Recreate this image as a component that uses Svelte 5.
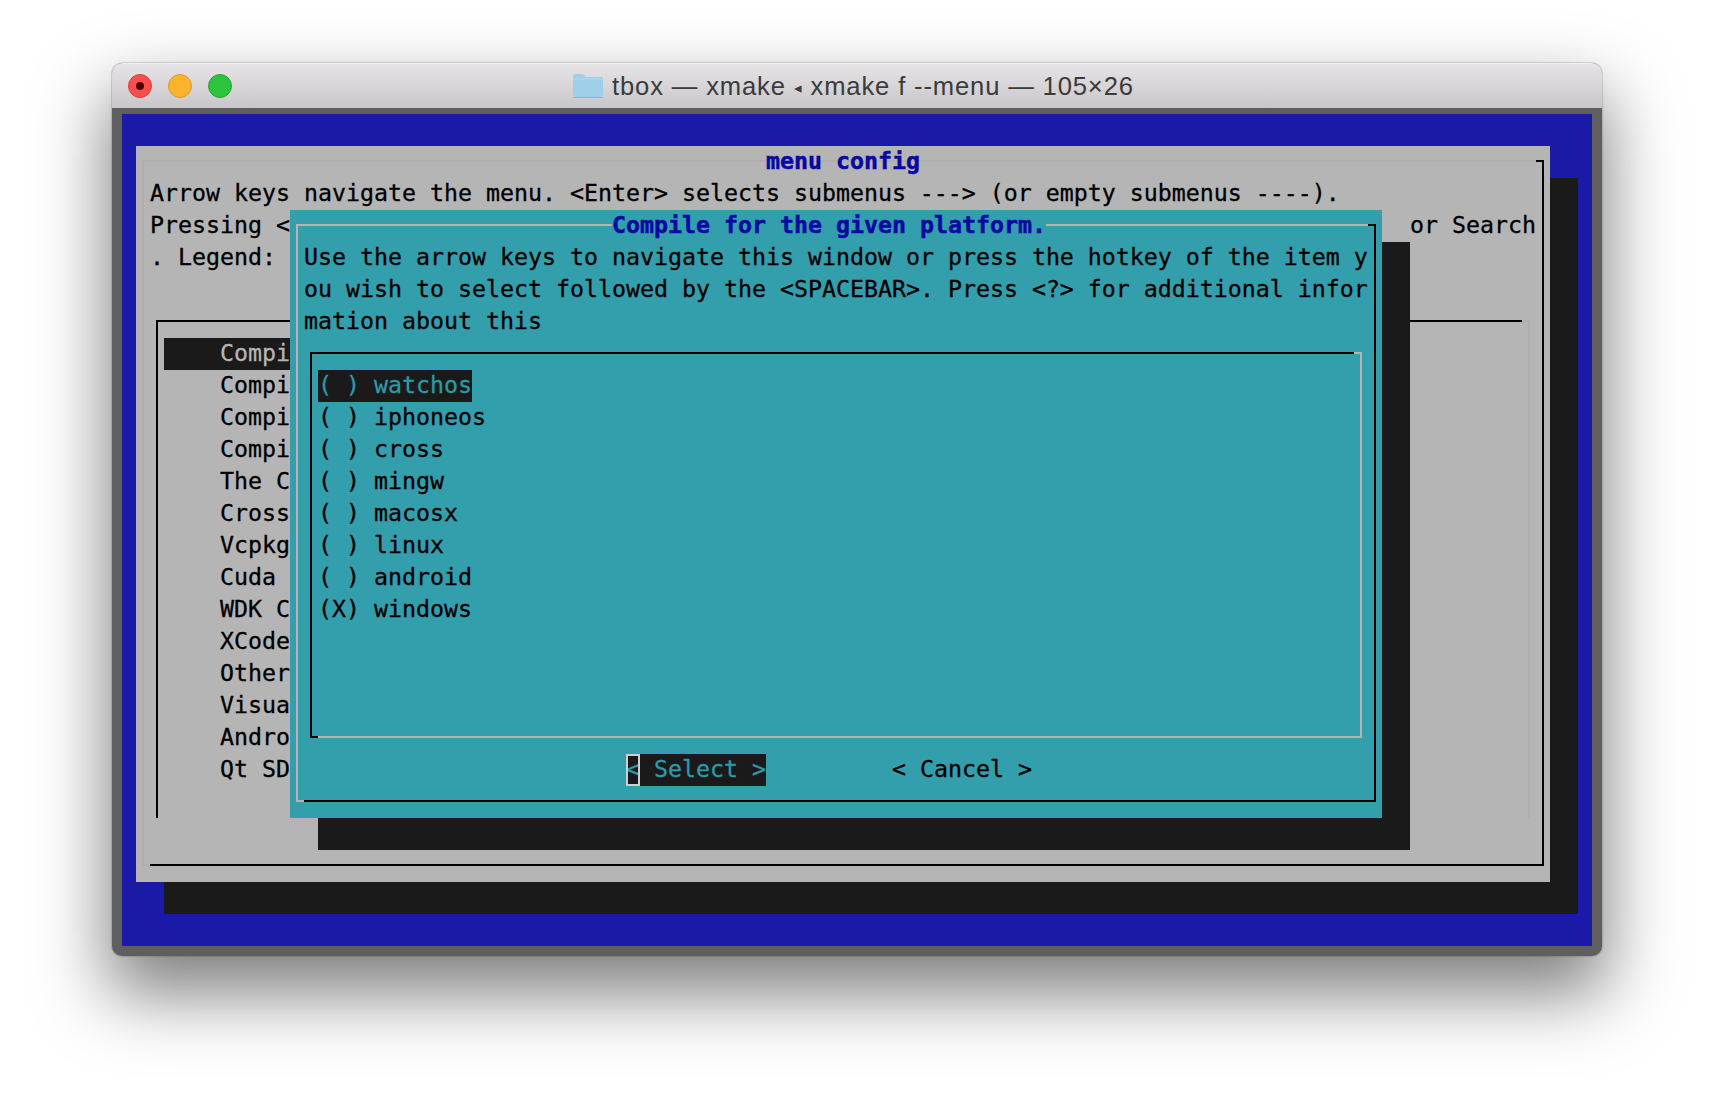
<script>
  const menuItems = ['Compi', 'Compi', 'Compi', 'Compi', 'The C', 'Cross', 'Vcpkg', 'Cuda', 'WDK C', 'XCode', 'Other', 'Visua', 'Andro', 'Qt SD'];
  const platforms = [
    { name: 'watchos', on: false },
    { name: 'iphoneos', on: false },
    { name: 'cross', on: false },
    { name: 'mingw', on: false },
    { name: 'macosx', on: false },
    { name: 'linux', on: false },
    { name: 'android', on: false },
    { name: 'windows', on: true }
  ];
  const help = [
    'Arrow keys navigate the menu. <Enter> selects submenus ---> (or empty submenus ----).',
    'Pressing <',
    '. Legend:'
  ];
  const dialogHelp = [
    'Use the arrow keys to navigate this window or press the hotkey of the item y',
    'ou wish to select followed by the <SPACEBAR>. Press <?> for additional infor',
    'mation about this'
  ];
</script>

<div class="window">
  <div class="titlebar">
    <div class="lights">
      <span class="light red"><i></i></span>
      <span class="light yellow"></span>
      <span class="light green"></span>
    </div>
    <div class="title">
      <svg class="folder" width="30" height="24" viewBox="0 0 30 24">
        <path d="M0 2.5Q0 0 2.5 0H9Q10.5 0 11.5 1.5L12.5 3H28.5Q30 3 30 4.5V22.5Q30 24 28.5 24H1.5Q0 24 0 22.5Z" fill="#9fcfe8" />
        <path d="M0 23H30V22.5Q30 24 28.5 24H1.5Q0 24 0 22.5Z" fill="#86b8d4" />
        <path d="M0 5H30" stroke="#b4dcf0" stroke-width="1" />
      </svg>
      <span>tbox — xmake <span class="tri">◂</span> xmake f --menu — 105×26</span>
    </div>
  </div>

  <div class="terminal">
    <div class="screen">
      <div class="frame"></div>
      <div class="row heading">menu config</div>
      <div class="text">
        {#each help as line}
          <div class="row">{line}</div>
        {/each}
      </div>
      <div class="row search">or Search</div>
      <div class="menu">
        {#each menuItems as item, i}
          <div class="row item" class:active={i === 0}>{item}</div>
        {/each}
      </div>

      <div class="dialog">
        <div class="frame"></div>
        <div class="row dialog-title"><span>Compile for the given platform.</span></div>
        <div class="dialog-body">
          {#each dialogHelp as line}
            <div class="row">{line}</div>
          {/each}
          <div class="choices">
            {#each platforms as p, i}
              <div class="row choice" class:active={i === 0}>({p.on ? 'X' : ' '}) {p.name}</div>
            {/each}
          </div>
          <div class="buttons">
            <div class="row button active"><span class="cursor">&lt;</span> Select &gt;</div>
            <div class="row button">&lt; Cancel &gt;</div>
          </div>
        </div>
      </div>
    </div>
  </div>
</div>

<style>
  :global(body) {
    background: #fff;
  }

  :global(#app) {
    height: 1116px;
    box-sizing: border-box;
    padding: 63px 0 0 112px;
    overflow: hidden;
  }

  .window {
    width: 1490px;
    height: 893px;
    border-radius: 11px 11px 10px 10px;
    background: #5f5f5f;
    box-shadow: 0 34px 70px 4px rgba(0, 0, 0, 0.5), 0 0 1px 1px rgba(0, 0, 0, 0.14);
  }

  .titlebar {
    height: 45px;
    box-sizing: border-box;
    border-top: 1px solid #f1f0f1;
    border-radius: 11px 11px 0 0;
    background: linear-gradient(#e6e4e6, #c8c6c8);
    display: flex;
    align-items: center;
  }

  .lights {
    display: flex;
    gap: 16px;
    padding-left: 16px;
  }

  .light {
    width: 24px;
    height: 24px;
    box-sizing: border-box;
    border-radius: 50%;
    border: 1px solid;
    display: flex;
    align-items: center;
    justify-content: center;
  }

  .light i {
    width: 8px;
    height: 8px;
    border-radius: 50%;
    background: #4d0000;
  }

  .red {
    background: #fc4e4c;
    border-color: #df3d3b;
  }

  .yellow {
    background: #fdb22e;
    border-color: #de9a24;
  }

  .green {
    background: #2cc33d;
    border-color: #22a931;
  }

  .title {
    margin-left: 341px;
    display: flex;
    align-items: center;
    gap: 9px;
    font-family: 'Liberation Sans', Arial, sans-serif;
    font-size: 25.6px;
    letter-spacing: 0.85px;
    color: #3b3b3b;
    white-space: nowrap;
  }

  .tri {
    font-size: 15px;
    vertical-align: 2px;
  }

  .terminal {
    margin: 6px 10px 0;
    width: 1470px;
    height: 832px;
    box-sizing: border-box;
    padding: 32px 0 0 14px;
    background: #1a1aa6;
    font-family: 'DejaVu Sans Mono', 'Liberation Mono', monospace;
    font-size: 23.26px;
    color: #000;
    -webkit-text-stroke: 0.3px;
  }

  .row {
    height: 32px;
    line-height: 30px;
    white-space: pre;
  }

  .screen {
    position: relative;
    width: 1414px;
    height: 736px;
    background: #b5b5b5;
    box-shadow: 28px 32px 0 #1a1a1a;
  }

  /* line-drawing box, light on two sides and black on the other two */
  .frame {
    position: absolute;
    left: 6px;
    top: 14px;
    width: 1402px;
    height: 706px;
    box-sizing: border-box;
    border-style: solid;
    border-width: 2px;
    border-color: #afafaf #000 #000 #afafaf;
  }

  .frame::before,
  .frame::after,
  .menu::after,
  .choices::after,
  .choices::before {
    content: '';
    position: absolute;
    height: 2px;
    width: 8px;
  }

  .frame::before {
    right: -2px;
    top: -2px;
    background: #000;
  }

  .frame::after {
    left: -2px;
    bottom: -2px;
    background: #afafaf;
  }

  .heading {
    position: relative;
    text-align: center;
    font-weight: 700;
    color: #0808a4;
    -webkit-text-stroke: 0.5px;
  }

  .text {
    position: relative;
    padding-left: 14px;
  }

  /* right end of the "Pressing" line, past the dialog's shadow */
  .search {
    position: absolute;
    left: 1274px;
    top: 64px;
  }

  .menu {
    position: relative;
    margin: 46px 0 0 20px;
    width: 1374px;
    height: 498px;
    box-sizing: border-box;
    padding: 16px 0 0 6px;
    border-style: solid;
    border-width: 2px 2px 0;
    border-color: #000 #afafaf #000 #000;
  }

  .menu::after {
    right: -2px;
    top: -2px;
    background: #afafaf;
  }

  .item {
    width: 126px;
    padding-left: 56px;
    box-sizing: border-box;
  }

  .item.active {
    background: #1a1a1a;
    color: #b5b5b5;
  }

  .dialog {
    position: absolute;
    left: 154px;
    top: 64px;
    width: 1092px;
    height: 608px;
    background: #339eac;
    box-shadow: 28px 32px 0 #1a1a1a;
  }

  .dialog .frame {
    width: 1080px;
    height: 578px;
    border-color: #b5b5b5 #000 #000 #b5b5b5;
  }

  .dialog .frame::after {
    background: #b5b5b5;
  }

  .dialog-title {
    position: relative;
    padding-left: 322px;
    font-weight: 700;
    color: #0808a4;
    -webkit-text-stroke: 0.5px;
  }

  .dialog-title span {
    display: inline-block;
    height: 32px;
    background: #339eac;
  }

  .dialog-body {
    position: relative;
    padding-left: 14px;
  }

  .choices {
    position: relative;
    margin: 14px 0 0 6px;
    width: 1052px;
    height: 386px;
    box-sizing: border-box;
    padding: 16px 0 0 6px;
    border-style: solid;
    border-width: 2px;
    border-color: #000 #b5b5b5 #b5b5b5 #000;
  }

  .choices::before {
    left: -2px;
    bottom: -2px;
    background: #000;
  }

  .choices::after {
    right: -2px;
    top: -2px;
    background: #b5b5b5;
  }

  .choice {
    width: 154px;
  }

  .choice.active,
  .button.active {
    background: #1a1a1a;
    color: #2b9aa8;
  }

  .buttons {
    display: flex;
    gap: 126px;
    margin: 16px 0 0 322px;
  }

  .button {
    width: 140px;
  }

  .cursor {
    display: inline-block;
    width: 14px;
    height: 32px;
    box-sizing: border-box;
    outline: 2px solid #cfcfcf;
    outline-offset: -2px;
    vertical-align: top;
  }
</style>
